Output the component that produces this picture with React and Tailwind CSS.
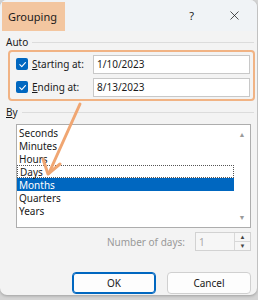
import { X } from 'lucide-react';

const UNITS = ['Seconds', 'Minutes', 'Hours', 'Days', 'Months', 'Quarters', 'Years'];

function Check() {
  return (
    <span className="flex h-[12px] w-[12px] shrink-0 items-center justify-center rounded-[2px] bg-[#0067c0]">
      <svg width="9" height="9" viewBox="0 0 10 10" fill="none">
        <path d="M2 5.2 4.2 7.3 8.2 2.8" stroke="white" strokeWidth="1.2" strokeLinecap="round" strokeLinejoin="round" />
      </svg>
    </span>
  );
}

function DateRow({ mnemonic, rest, value }) {
  return (
    <div className="flex h-[19px] items-center">
      <div className="flex w-[83px] items-center gap-[4px] whitespace-nowrap pl-[6px]">
        <Check />
        <span><span className="underline">{mnemonic}</span>{rest}</span>
      </div>
      <div className="flex h-[19px] w-[157px] items-center border border-[#c8c8c8] bg-white pl-[3px]">{value}</div>
    </div>
  );
}

function GroupLabel({ children }) {
  return (
    <div className="flex items-center gap-[4px] pl-[6px] pr-[3px]">
      <span>{children}</span>
      <span className="h-px flex-1 bg-[#dcdcdc]" />
    </div>
  );
}

export default function App() {
  return (
    <div className="relative h-[300px] w-[258px] bg-[#d4d4d4] text-[10px] leading-none text-[#1a1a1a]" style={{ fontFamily: '"Noto Sans", "Open Sans", sans-serif' }}>
      <div className="h-[295px] w-[257px] overflow-hidden rounded-[7px] bg-[#f3f3f3] shadow-[0_1px_3px_rgba(0,0,0,0.25)]">
        {/* title bar */}
        <div className="flex h-[31px] items-start bg-[#f0f3f6]">
          <div className="ml-[2px] mt-[2px] flex h-[29px] w-[63px] items-center bg-[#f3c6a0] pl-[6px] text-[11px]">Grouping</div>
          <span className="ml-auto mr-[33px] mt-[10px] text-[11px]">?</span>
          <X className="mr-[15px] mt-[8px]" size={15} strokeWidth={1.2} />
        </div>

        <div className="mt-[6px]">
          <GroupLabel>Auto</GroupLabel>
        </div>

        <div className="ml-[8px] mr-[2px] mt-[3px] flex h-[51px] flex-col justify-center gap-[4px] rounded-[4px] border-2 border-[#f1b384]">
          <DateRow mnemonic="S" rest="tarting at:" value="1/10/2023" />
          <DateRow mnemonic="E" rest="nding at:" value="8/13/2023" />
        </div>

        <div className="mt-[6px]">
          <GroupLabel><span className="underline">B</span>y</GroupLabel>
        </div>

        {/* listbox */}
        <div className="ml-[16px] mt-[7px] flex h-[104px] w-[235px] border border-[#adadad] bg-white">
          <div className="flex-1 pt-px">
            {UNITS.map(u => (
              <div
                key={u}
                className={
                  'flex h-[13px] items-center pl-[2px] ' +
                  (u === 'Months' ? 'bg-[#0067c0] text-white' : u === 'Days' ? 'border border-dotted border-[#555]' : '')
                }
              >
                {u}
              </div>
            ))}
          </div>
          <div className="flex w-[16px] flex-col items-center justify-between py-[6px] text-[7px] text-[#9a9a9a]">
            <span>▲</span>
            <span>▼</span>
          </div>
        </div>

        {/* number of days */}
        <div className="mt-[4px] flex items-center justify-end pr-[6px]">
          <span className="mr-[10px] text-[#999]">Number of days:</span>
          <div className="flex h-[19px] w-[56px] border border-[#d2d2d2] bg-[#f6f6f6]">
            <div className="flex flex-1 items-center pl-[3px] text-[#a8a8a8]">1</div>
            <div className="flex w-[16px] flex-col border-l border-[#d8d8d8] text-[6px] leading-none text-[#444]">
              <span className="flex flex-1 items-center justify-center border-b border-[#d8d8d8]">▲</span>
              <span className="flex flex-1 items-center justify-center">▼</span>
            </div>
          </div>
        </div>

        {/* buttons */}
        <div className="mt-[21px] flex justify-end gap-[11px] pr-[6px]">
          <button className="h-[22px] w-[84px] rounded-[4px] border border-[#0067c0] bg-[#fdfdfd] shadow-[inset_0_0_0_1px_#0067c0]">OK</button>
          <button className="h-[22px] w-[84px] rounded-[4px] border border-[#d0d0d0] bg-[#fdfdfd]">Cancel</button>
        </div>
      </div>

      {/* annotation arrow */}
      <svg className="pointer-events-none absolute left-0 top-0" width="258" height="300">
        <g stroke="#f0a672" strokeWidth="3" strokeLinecap="round" fill="none">
          <path d="M80 104 L49 173" />
          <path d="M43 159 L48 174 L60 164" strokeLinejoin="round" />
        </g>
      </svg>
    </div>
  );
}
